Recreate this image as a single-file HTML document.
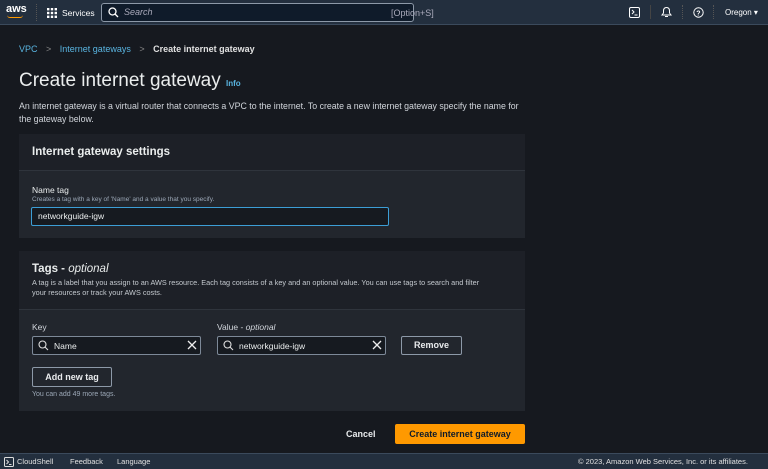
<!DOCTYPE html><html><head><style>
*{box-sizing:border-box;margin:0;padding:0}
body{width:768px;height:469px;background:#16191f;font-family:"Liberation Sans",sans-serif;color:#d1d5db;position:relative;overflow:hidden;font-size:9px}
.a{position:absolute}
.nav{left:0;top:0;width:768px;height:25px;background:#232f3e;border-bottom:1px solid #3b4a5c}
.panel{left:19px;width:506px;background:#22262d}
.hd{background:#1d2027;border-bottom:1px solid #2f343c}
.inp{background:#161a20;border:1px solid #7d8998;border-radius:2px;height:19px}
.btn{border:1px solid #8d99a8;border-radius:2px;color:#e9ebed;font-weight:bold;font-size:9px;text-align:center;line-height:17px}
</style></head><body>
<div class="a nav"></div>
<div class="a" style="left:6px;top:3px;color:#fff;font-size:11px;font-weight:bold">aws</div>
<div class="a" style="left:7px;top:15px;width:16px;height:3px;border-bottom:1.5px solid #f90;border-radius:0 0 8px 8px"></div>
<div class="a" style="left:36px;top:4px;height:17px;border-left:1px dotted #555"></div>
<svg class="a" style="left:47px;top:8px" width="10" height="10"><g fill="#fff"><rect x="0" y="0" width="2.4" height="2.4"/><rect x="3.8" y="0" width="2.4" height="2.4"/><rect x="7.6" y="0" width="2.4" height="2.4"/><rect x="0" y="3.8" width="2.4" height="2.4"/><rect x="3.8" y="3.8" width="2.4" height="2.4"/><rect x="7.6" y="3.8" width="2.4" height="2.4"/><rect x="0" y="7.6" width="2.4" height="2.4"/><rect x="3.8" y="7.6" width="2.4" height="2.4"/><rect x="7.6" y="7.6" width="2.4" height="2.4"/></g></svg>
<div class="a" style="left:62px;top:8px;color:#fff;font-size:8.5px">Services</div>
<div class="a" style="left:101px;top:3px;width:313px;height:19px;border:1px solid #8d99a8;border-radius:3px;background:#0f1b2a"></div>
<svg class="a" style="left:108px;top:7px" width="11" height="11"><circle cx="4.5" cy="4.5" r="3.5" stroke="#fff" stroke-width="1.3" fill="none"/><path d="M7 7l3 3" stroke="#fff" stroke-width="1.3"/></svg>
<div class="a" style="left:124px;top:7px;color:#aab;font-style:italic;font-size:9px">Search</div>
<div class="a" style="left:391px;top:8px;color:#aab;font-size:9px">[Option+S]</div>
<svg class="a" style="left:629px;top:7px" width="11" height="11"><rect x="0.5" y="0.5" width="10" height="10" rx="1.5" stroke="#fff" fill="none"/><path d="M3 3l2 2-2 2M5.5 8h3" stroke="#fff" fill="none"/></svg>
<div class="a" style="left:650px;top:5px;height:14px;border-left:1px solid #444"></div>
<svg class="a" style="left:661px;top:6px" width="11" height="12"><path d="M5.5 1.5c-2 0-3 1.5-3 3.5v2L1 9h9L8.5 7V5c0-2-1-3.5-3-3.5zM4 10.5h3" stroke="#fff" fill="none"/></svg>
<div class="a" style="left:682px;top:5px;height:14px;border-left:1px dotted #555"></div>
<svg class="a" style="left:693px;top:7px" width="11" height="11"><circle cx="5.5" cy="5.5" r="4.7" stroke="#fff" fill="none"/><text x="3.3" y="8.5" font-size="7" fill="#fff" font-weight="bold" font-family="Liberation Sans">?</text></svg>
<div class="a" style="left:713px;top:5px;height:14px;border-left:1px dotted #555"></div>
<div class="a" style="left:725px;top:8px;color:#fff;font-size:8px">Oregon ▾</div>

<div class="a" style="left:19px;top:44px;font-size:9px;color:#59b4e0">VPC <span style="color:#888;margin:0 6px">&gt;</span> Internet gateways <span style="color:#888;margin:0 6px">&gt;</span> <span style="color:#e0e0e0;font-weight:bold">Create internet gateway</span></div>
<div class="a" style="left:19px;top:70px;font-size:19px;color:#eaeded">Create internet gateway <span style="font-size:8px;color:#59b4e0;font-weight:bold">Info</span></div>
<div class="a" style="left:19px;top:100px;width:510px;font-size:8.8px;line-height:13px;color:#d1d5db">An internet gateway is a virtual router that connects a VPC to the internet. To create a new internet gateway specify the name for the gateway below.</div>

<div class="a panel" style="top:134px;height:104px"><div class="hd" style="height:37px;padding:12px 13px;font-size:11.5px;font-weight:bold;color:#eaeded">Internet gateway settings</div></div>
<div class="a" style="left:32px;top:185px;font-size:8.5px;color:#eaeded">Name tag</div>
<div class="a" style="left:32px;top:196px;font-size:6.5px;color:#9ba7b6">Creates a tag with a key of 'Name' and a value that you specify.</div>
<div class="a inp" style="left:31px;top:207px;width:358px;border:1.5px solid #3c9ed6;padding:3px 6px;font-size:8.5px;color:#eaeded">networkguide-igw</div>

<div class="a panel" style="top:251px;height:160px"><div class="hd" style="height:59px;padding:12px 13px">
<div style="font-size:11.5px;font-weight:bold;color:#eaeded">Tags - <i style="font-weight:normal">optional</i></div>
<div style="font-size:7.3px;line-height:10px;color:#c4c9cf;margin-top:3px;width:460px">A tag is a label that you assign to an AWS resource. Each tag consists of a key and an optional value. You can use tags to search and filter your resources or track your AWS costs.</div></div></div>
<div class="a" style="left:32px;top:322px;font-size:8.5px;color:#d1d5db">Key</div>
<div class="a" style="left:217px;top:322px;font-size:8.5px;color:#d1d5db">Value - <i>optional</i></div>
<div class="a inp" style="left:32px;top:336px;width:169px"></div>
<div class="a inp" style="left:217px;top:336px;width:169px"></div>
<svg class="a" style="left:38px;top:340px" width="11" height="11"><circle cx="4.5" cy="4.5" r="3.5" stroke="#ddd" stroke-width="1.1" fill="none"/><path d="M7 7l3 3" stroke="#ddd" stroke-width="1.1"/></svg>
<svg class="a" style="left:223px;top:340px" width="11" height="11"><circle cx="4.5" cy="4.5" r="3.5" stroke="#ddd" stroke-width="1.1" fill="none"/><path d="M7 7l3 3" stroke="#ddd" stroke-width="1.1"/></svg>
<div class="a" style="left:54px;top:341px;font-size:8.5px;color:#eaeded">Name</div>
<div class="a" style="left:239px;top:341px;font-size:8.5px;color:#eaeded">networkguide-igw</div>
<svg class="a" style="left:187px;top:340px" width="10" height="10"><path d="M1 1l8 8M9 1L1 9" stroke="#eee" stroke-width="1.3"/></svg>
<svg class="a" style="left:372px;top:340px" width="10" height="10"><path d="M1 1l8 8M9 1L1 9" stroke="#eee" stroke-width="1.3"/></svg>
<div class="a btn" style="left:401px;top:336px;width:61px;height:19px">Remove</div>
<div class="a btn" style="left:32px;top:367px;width:80px;height:20px;line-height:18px">Add new tag</div>
<div class="a" style="left:32px;top:391px;font-size:7px;color:#9ba7b6">You can add 49 more tags.</div>

<div class="a" style="left:346px;top:429px;font-size:9px;font-weight:bold;color:#e9ebed">Cancel</div>
<div class="a" style="left:395px;top:424px;width:130px;height:20px;background:#ff9900;border-radius:2px;color:#0f1b2a;font-weight:bold;font-size:9px;text-align:center;line-height:20px">Create internet gateway</div>

<div class="a" style="left:0;top:453px;width:768px;height:16px;background:#232f3e;border-top:1px solid #3b4a5c"></div>
<svg class="a" style="left:4px;top:457px" width="10" height="10"><rect x="0.5" y="0.5" width="9" height="9" rx="1" stroke="#ddd" fill="none"/><path d="M2.5 3l2 2-2 2M5 7.5h2.5" stroke="#ddd" fill="none"/></svg>
<div class="a" style="left:17px;top:457px;font-size:7.5px;color:#e0e0e0">CloudShell</div>
<div class="a" style="left:70px;top:457px;font-size:7.5px;color:#e0e0e0">Feedback</div>
<div class="a" style="left:117px;top:457px;font-size:7.5px;color:#e0e0e0">Language</div>
<div class="a" style="left:578px;top:457px;font-size:7.5px;color:#e0e0e0">© 2023, Amazon Web Services, Inc. or its affiliates.</div>
</body></html>
